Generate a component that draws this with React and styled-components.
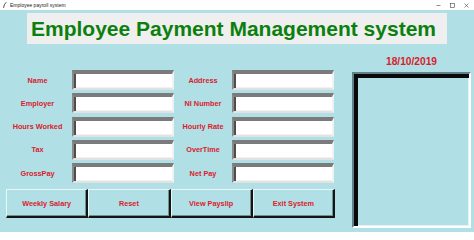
import React from "react";
import styled, { createGlobalStyle } from "styled-components";

const Global = createGlobalStyle`
  html, body { margin: 0; padding: 0; }
  body { width: 474px; height: 232px; overflow: hidden; font-family: "Liberation Sans", Arial, sans-serif; }
  * { box-sizing: border-box; }
`;

const Window = styled.div`
  width: 474px;
  height: 232px;
  display: flex;
  flex-direction: column;
  background: #b0e0e6;
`;

const TitleBar = styled.div`
  height: 10px;
  flex: none;
  background: #ffffff;
  display: flex;
  align-items: center;
  padding-left: 3px;
`;

const TitleText = styled.span`
  font-family: "Liberation Sans", Arial, sans-serif;
  font-size: 5px;
  color: #222;
  margin-left: 3px;
  flex: 1;
`;

const Controls = styled.div`
  display: flex;
  align-items: center;
  gap: 9px;
  padding-right: 5px;
`;

const Body = styled.div`
  flex: 1;
  display: flex;
  flex-direction: column;
`;

const Banner = styled.div`
  margin: 3px auto 0;
  width: 420px;
  height: 31px;
  background: #efefef;
  display: flex;
  align-items: center;
  justify-content: center;
  padding-right: 7px;
  font-family: "Liberation Sans", Arial, sans-serif;
  font-weight: bold;
  font-size: 21px;
  color: #0b800e;
`;

const Content = styled.div`
  display: flex;
  padding-left: 6px;
`;

const LeftCol = styled.div`
  width: 329px;
  padding-top: 26px;
  display: flex;
  flex-direction: column;
`;

const FieldGrid = styled.div`
  display: grid;
  grid-template-columns: 66px 102px 58px 102px;
  grid-auto-rows: 20px;
  row-gap: 3.33px;
`;

const Label = styled.div`
  display: flex;
  align-items: center;
  justify-content: center;
  padding-right: ${(p) => (p.$first ? "3px" : "0")};
  font-family: "Liberation Sans", Arial, sans-serif;
  font-weight: bold;
  font-size: 7.3px;
  color: #d8202c;
  white-space: nowrap;
`;

const Input = styled.div`
  background: #ffffff;
  border-style: solid;
  border-width: 4px 2px 2px 2px;
  border-color: #7b7b7b #f2f2f2 #e2e2e2 #8a8a8a;
  box-shadow: inset 2px 0 0 #4e4e4e, inset 0 -1px 0 #f4f0f0;
`;

const ButtonRow = styled.div`
  margin-top: 5.7px;
  display: grid;
  grid-template-columns: repeat(4, 1fr);
  height: 29px;
`;

const Button = styled.button`
  background: #b0e0e6;
  border-style: solid;
  border-width: 1px 2px 2px 1px;
  border-color: #eaf6f8 #141414 #141414 #eaf6f8;
  box-shadow: inset -1px -1px 0 #6e9196;
  font-family: "Liberation Sans", Arial, sans-serif;
  font-weight: bold;
  font-size: 7.3px;
  color: #d8202c;
  padding: 0;
  margin: 0;
`;

const RightCol = styled.div`
  margin-left: 17px;
  width: 119px;
  display: flex;
  flex-direction: column;
  align-items: center;
`;

const DateText = styled.div`
  margin-top: 12px;
  height: 12px;
  line-height: 12px;
  font-family: "Liberation Sans", Arial, sans-serif;
  font-weight: bold;
  font-size: 10.2px;
  color: #d8202c;
`;

const Panel = styled.div`
  margin-top: 4px;
  width: 119px;
  height: 156px;
  background: #b0e0e6;
  border-style: solid;
  border-width: 2px;
  border-color: #5f8388 #ffffff #ffffff #5f8388;
  box-shadow: inset 4px 4px 0 #0a0a0a, inset -1px -1px 0 #e4f4f6;
`;

const rows = [
  ["Name", "Address"],
  ["Employer", "NI Number"],
  ["Hours Worked", "Hourly Rate"],
  ["Tax", "OverTime"],
  ["GrossPay", "Net Pay"],
];

const buttons = ["Weekly Salary", "Reset", "View Payslip", "Exit System"];

export default function App() {
  return (
    <>
      <Global />
      <Window>
        <TitleBar>
          <svg width="4" height="6" viewBox="0 0 4 6">
            <path d="M3.5 0.3 C1.5 1.5 1 3.5 0.6 5.8" stroke="#333" strokeWidth="0.9" fill="none" />
          </svg>
          <TitleText>Employee payroll system</TitleText>
          <Controls>
            <svg width="5" height="5" viewBox="0 0 5 5">
              <path d="M0.5 2.5 H4.5" stroke="#444" strokeWidth="0.6" />
            </svg>
            <svg width="5" height="5" viewBox="0 0 5 5">
              <rect x="0.6" y="0.6" width="3.8" height="3.8" stroke="#444" strokeWidth="0.6" fill="none" />
            </svg>
            <svg width="5" height="5" viewBox="0 0 5 5">
              <path d="M0.5 0.5 L4.5 4.5 M4.5 0.5 L0.5 4.5" stroke="#444" strokeWidth="0.6" />
            </svg>
          </Controls>
        </TitleBar>
        <Body>
          <Banner>Employee Payment Management system</Banner>
          <Content>
            <LeftCol>
              <FieldGrid>
                {rows.map(([a, b]) => (
                  <React.Fragment key={a}>
                    <Label $first>{a}</Label>
                    <Input />
                    <Label>{b}</Label>
                    <Input />
                  </React.Fragment>
                ))}
              </FieldGrid>
              <ButtonRow>
                {buttons.map((t) => (
                  <Button key={t}>{t}</Button>
                ))}
              </ButtonRow>
            </LeftCol>
            <RightCol>
              <DateText>18/10/2019</DateText>
              <Panel />
            </RightCol>
          </Content>
        </Body>
      </Window>
    </>
  );
}
